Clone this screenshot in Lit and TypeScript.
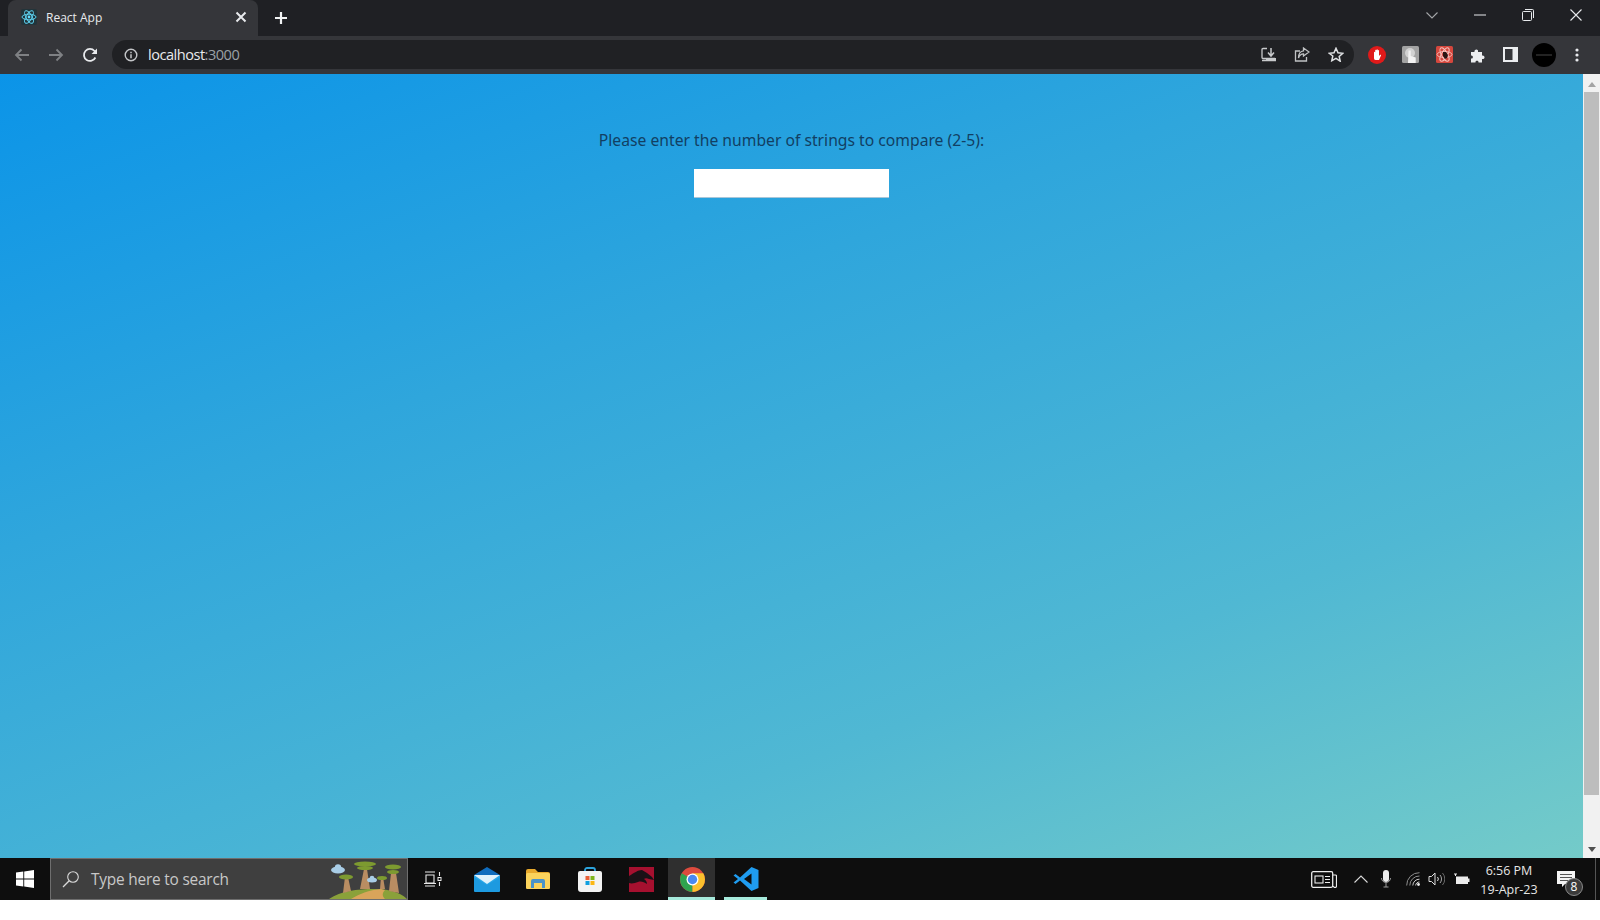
import { LitElement, html, css, svg } from "lit";
import { customElement } from "lit/decorators.js";

const s = (w: number, h: number, body: unknown) =>
  html`<svg width=${w} height=${h} viewBox="0 0 ${w} ${h}" fill="none">${body}</svg>`;

const react = s(16, 16, svg`<rect width="16" height="16" rx="2" fill="#22343a"/>
  <g stroke="#61dafb" stroke-width="0.9" fill="none"><ellipse cx="8" cy="8" rx="7" ry="2.8"/>
  <ellipse cx="8" cy="8" rx="7" ry="2.8" transform="rotate(60 8 8)"/><ellipse cx="8" cy="8" rx="7" ry="2.8" transform="rotate(120 8 8)"/></g>
  <circle cx="8" cy="8" r="1.4" fill="#61dafb"/>`);
const closeX = s(12, 12, svg`<path d="M1.5 1.5 10.5 10.5M10.5 1.5 1.5 10.5" stroke="#e8eaed" stroke-width="2"/>`);
const plus = s(14, 14, svg`<path d="M7 1v12M1 7h12" stroke="#f1f3f4" stroke-width="2.2"/>`);
const chev = s(12, 7, svg`<path d="M.5 .5 6 6l5.500-5.500" stroke="#a4a6a9" stroke-width="1.1"/>`);
const minimize = s(12, 2, svg`<path d="M0 1h12" stroke="#e8eaed" stroke-width="1"/>`);
const restore = s(12, 12, svg`<rect x=".5" y="2.5" width="9" height="9" rx="1" stroke="#e8eaed"/><path d="M3 .5h7.5a1 1 0 0 1 1 1V9" stroke="#e8eaed"/>`);
const winClose = s(12, 12, svg`<path d="M.5.5l11 11M11.500.5l-11 11" stroke="#e8eaed" stroke-width="1.1"/>`);
const back = s(16, 14, svg`<path d="M15 7H2M7.500 1.500 2 7l5.500 5.500" stroke="#7f8184" stroke-width="1.8"/>`);
const fwd = s(16, 14, svg`<path d="M1 7h13M8.500 1.500 14 7l-5.500 5.500" stroke="#7f8184" stroke-width="1.8"/>`);
const reload = s(16, 16, svg`<path d="M13.400 10.500A6 6 0 1 1 12.500 4L14 5.500" stroke="#e8eaed" stroke-width="1.8"/><path d="M15 1.500V7H9.500z" fill="#e8eaed"/>`);
const info = s(14, 14, svg`<circle cx="7" cy="7" r="5.800" stroke="#c4c6c9" stroke-width="1.400"/><path d="M7 6.200v4M7 3.800v1.400" stroke="#c4c6c9" stroke-width="1.500"/>`);
const install = s(16, 15, svg`<path d="M6 1.500H2a1 1 0 0 0-1 1v8a1 1 0 0 0 1 1h12M1 13.500h14" stroke="#c8cacc" stroke-width="1.300"/>
  <path d="M10 1v7M7 5.500l3 3.500 3-3.500" stroke="#c8cacc" stroke-width="1.500"/><path d="M5 11h10v3H5z" fill="#c8cacc"/>`);
const share = s(16, 15, svg`<path d="M6 4H1.500v10h11V10" stroke="#c0c2c4" stroke-width="1.300"/><path d="M9.500 1l5.500 4-5.500 4V6.800C7 6.800 5.500 8 4.500 11c0-4 2-7 5-7.200z" stroke="#c0c2c4" stroke-width="1.300"/>`);
const star = s(16, 15, svg`<path d="M8 1.300l2 4.500 4.800.5-3.600 3.200 1 4.700L8 11.300 3.800 13.700l1-4.700L1.200 6.300 6 5.800z" stroke="#dfe1e3" stroke-width="1.500"/>`);
const stopExt = s(18, 18, svg`<circle cx="9" cy="9" r="9" fill="#e01a1a"/><path d="M6 6.500c0-1 1.200-1 1.200 0V4.500c0-1 1.300-1 1.300 0V4c0-1 1.300-1 1.300 0v.8c0-1 1.200-1 1.200 0V10l.8-1c.7-.7 1.600 0 1.100.8L11 14H7.500C6.500 14 6 13 6 12z" fill="#fff"/>`);
const touchExt = s(17, 17, svg`<rect width="17" height="17" rx="1.500" fill="#a3a3a3"/><circle cx="8" cy="7" r="5" fill="#d2d2d2"/><path d="M6.500 4.500h2.200v5.500l5 1.500v5.500H6z" fill="#f2f2f2"/>`);
const reactExt = s(17, 17, svg`<rect width="17" height="17" rx="1.500" fill="#d5473d"/><g stroke="#f5c2bd" stroke-width=".9" fill="none"><ellipse cx="8.500" cy="8.500" rx="7.500" ry="3"/><ellipse cx="8.500" cy="8.500" rx="7.500" ry="3" transform="rotate(60 8.500 8.500)"/><ellipse cx="8.500" cy="8.500" rx="7.500" ry="3" transform="rotate(120 8.500 8.500)"/></g><path d="M7 6h3l2 3-1 3-2 1-2-3z" fill="#2a1512"/>`);
const puzzle = s(16, 16, svg`<path d="M1 5h3.500c-.8-3 4.300-3.500 3.500 0H12v3.500c3-.8 3.800 4 0 3.500V15.500H8.500c.6-2.500-3.600-2.500-3 0H1V11.500c2.500.6 2.500-3.600 0-3z" fill="#eceef0"/>`);
const sidePanel = s(15, 15, svg`<rect width="15" height="15" fill="#eceef0"/><rect x="2" y="2" width="7.500" height="11" fill="#35363a"/>`);
const avatar = s(24, 24, svg`<circle cx="12" cy="12" r="12" fill="#000"/><path d="M4 12h16" stroke="#666" stroke-width=".7"/>`);
const dots = s(4, 14, svg`<circle cx="2" cy="2" r="1.600" fill="#e8eaed"/><circle cx="2" cy="7" r="1.600" fill="#e8eaed"/><circle cx="2" cy="12" r="1.600" fill="#e8eaed"/>`);

const windows = s(18, 18, svg`<path d="M0 2.600 7.300 1.500V8.500H0zM8.200 1.400 18 0V8.500H8.200zM0 9.400H7.300V16.500L0 15.400zM8.200 9.400H18V18L8.200 16.600z" fill="#fff"/>`);
const searchIco = s(18, 18, svg`<circle cx="11" cy="7" r="5.300" stroke="#d8d8d8" stroke-width="1.100"/><path d="M7.200 10.800 1 17" stroke="#d8d8d8" stroke-width="1.300"/>`);
const doodle = s(78, 38, svg`
  <path d="M0 38c12-8 28-10 45-10 14 0 26 3 33 10z" fill="#8aa13a"/>
  <path d="M22 38c8-5 18-9 30-10l4 1c-3 3-3 6 0 9z" fill="#d9a45a"/>
  <g fill="#b98d62"><path d="M14 32l2-16h3l3 14zM31 28l4-20h3l3 20zM60 30l2-18h5l3 20zM51 28l1-12h2l2 12z"/></g>
  <g fill="#7d9a30"><ellipse cx="36" cy="3" rx="11" ry="2.600"/><ellipse cx="36" cy="7" rx="8" ry="2"/><ellipse cx="17" cy="16" rx="7" ry="2.500"/><ellipse cx="64" cy="6" rx="8" ry="2.600"/><ellipse cx="64" cy="11" rx="6" ry="2"/><ellipse cx="53" cy="17" rx="5" ry="2"/></g>
  <g fill="#a9cde6"><ellipse cx="9" cy="9" rx="7" ry="3.500"/><circle cx="9" cy="6.500" r="3.200"/><ellipse cx="43" cy="19" rx="5" ry="2.500"/><circle cx="43" cy="17" r="2.300"/></g>`);
const taskView = s(18, 16, svg`<path d="M1 1h10M1 15h10M2 4h8v8H2zM0 12.500h12M15.500 1v4M15.500 11v4" stroke="#e8e8e8" stroke-width="1.100"/><rect x="14" y="6.500" width="3" height="3" stroke="#e8e8e8"/>`);
const mail = s(26, 25, svg`<path d="M0 8 13 0l13 8v2H0z" fill="#0f6cbd"/><rect y="8" width="26" height="17" rx="1.500" fill="#29a7e8"/><path d="M0 8l13 9 13-9z" fill="#dff1fb"/><path d="M0 10l13 8 13-8v13a2 2 0 0 1-2 2H2a2 2 0 0 1-2-2z" fill="#1d9ae0"/>`);
const folder = s(24, 20, svg`<path d="M0 2a2 2 0 0 1 2-2h7l3 3h10a2 2 0 0 1 2 2v13a2 2 0 0 1-2 2H2a2 2 0 0 1-2-2z" fill="#e8a92c"/><rect y="4" width="24" height="16" rx="1.500" fill="#fbd35c"/><path d="M5 19v-7a2 2 0 0 1 2-2h10a2 2 0 0 1 2 2v7h-3v-5H8v5z" fill="#4a93c9"/>`);
const store = s(24, 25, svg`<path d="M7 6V3a2 2 0 0 1 2-2h6a2 2 0 0 1 2 2v3" stroke="#2ca3dc" stroke-width="1.800"/><path d="M0 6a2 2 0 0 1 2-2h20a2 2 0 0 1 2 2v16a3 3 0 0 1-3 3H3a3 3 0 0 1-3-3z" fill="#f3f3f3"/><rect x="7.500" y="9" width="4" height="4" fill="#e95f36"/><rect x="12.500" y="9" width="4" height="4" fill="#7fb51c"/><rect x="7.500" y="14" width="4" height="4" fill="#11a0e0"/><rect x="12.500" y="14" width="4" height="4" fill="#fcb713"/>`);
const kali = s(25, 25, svg`<rect width="25" height="25" fill="#a6102f"/><path d="M0 9c5-3 9-6 13-6l5 3 5 4 2 3-5-1c-2-1-4-1-5 0 2 1 3 3 3 5-3-2-6-3-9-2-3 1-6 2-9 1z" fill="#1a1116"/>`);
const chrome = s(25, 25, svg`<circle cx="12.500" cy="12.500" r="12.500" fill="#dd4b3e"/><path d="M12.500 12.500 1.700 6.300A12.500 12.500 0 0 0 12.500 25z" fill="#2fa44f"/><path d="M12.500 25A12.500 12.500 0 0 0 23.300 6.300H12.500z" fill="#fbc02d"/><circle cx="12.500" cy="12.500" r="6" fill="#fff"/><circle cx="12.500" cy="12.500" r="4.700" fill="#4a89f0"/>`);
const vscode = s(26, 26, svg`<path d="M18.500 1 25.500 4v18l-7 3L7 14.500 2.500 18 .5 16.500 5 13 .5 9.500 2.500 8 7 11.500z" fill="#1f9cf0"/><path d="M18.500 7.500 11 13l7.500 5.500z" fill="#0e0e0e"/>`);
const news = s(26, 17, svg`<rect x=".7" y=".7" width="21" height="15.600" rx="1.500" stroke="#ececec" stroke-width="1.300"/><path d="M22 4h2.500a1 1 0 0 1 1 1v10a1.500 1.500 0 0 1-3 0" stroke="#ececec" stroke-width="1.200"/><rect x="4" y="5" width="8" height="7" stroke="#ececec" stroke-width="1.100"/><path d="M14 5.500h5M14 8.500h5M14 11.500h5" stroke="#ececec" stroke-width="1.100"/>`);
const up = s(14, 8, svg`<path d="M.5 7.500 7 1l6.500 6.500" stroke="#dadada" stroke-width="1.100"/>`);
const mic = s(10, 18, svg`<rect x="2" y="0" width="6" height="12" rx="3" fill="#ececec"/><path d="M.5 8a4.500 4.500 0 0 0 9 0M5 13v4M2.500 17h5" stroke="#9a9a9a"/>`);
const wifi = s(15, 14, svg`<path d="M.7 13.500A12.500 12.500 0 0 1 13.500 .7M3.800 13.500A9.500 9.500 0 0 1 13.500 4" stroke="#8e8e8e"/><path d="M6.800 13.500A6.500 6.500 0 0 1 13.500 7.200M9.700 13.500A3.500 3.500 0 0 1 13.500 10" stroke="#c9c9c9"/><circle cx="12.500" cy="12.500" r="1.400" fill="#ececec"/>`);
const vol = s(17, 14, svg`<path d="M1 4.500h2.500L7 1v12L3.500 9.500H1z" stroke="#e0e0e0"/><path d="M9.500 5a3 3 0 0 1 0 4" stroke="#e0e0e0"/><path d="M12 3a6 6 0 0 1 0 8" stroke="#a8a8a8"/><path d="M14.500 1a9 9 0 0 1 0 12" stroke="#6a6a6a"/>`);
const batt = s(17, 12, svg`<path d="M1 1h3M2.500 1v2" stroke="#ececec"/><rect x="3" y="3.500" width="12" height="7.500" fill="#ececec"/><rect x="15" y="5.500" width="1.500" height="3.500" fill="#ececec"/>`);
const notif = s(18, 16, svg`<path d="M0 0h18v13H8l-3 3v-3H0z" fill="#f4f4f4"/><path d="M3 3.500h12M3 6.500h12M3 9.500h8" stroke="#555"/>`);

@customElement("app-root")
export class AppRoot extends LitElement {
  static styles = css`
    :host { display: block; width: 1600px; height: 920px; background: #fff; font-family: "Open Sans", "Noto Sans", sans-serif; overflow: hidden; }
    svg { display: block; flex: none; }
    .tabstrip { height: 36px; background: #1f2024; display: flex; padding-left: 8px; }
    .tab { width: 250px; height: 36px; background: #35363a; border-radius: 8px 8px 0 0; display: flex; align-items: center; padding: 0 11px 2px 13px; box-sizing: border-box; color: #e8eaed; font-size: 12px; }
    .tab .title { margin-left: 9px; flex: 1; }
    .plus { width: 46px; display: flex; align-items: center; justify-content: center; }
    .spacer { flex: 1; }
    .ctl { width: 48px; height: 30px; display: flex; align-items: center; justify-content: center; }
    .toolbar { height: 38px; background: #35363a; display: flex; align-items: center; padding: 0 6px 1px 5px; box-sizing: border-box; }
    .nav { width: 34px; display: flex; justify-content: center; }
    .omni { width: 1242px; height: 29px; margin-left: 5px; margin-right: 6px; background: #202124; border-radius: 15px; display: flex; align-items: center; padding: 0 1px 0 12px; box-sizing: border-box; font-size: 14.6px; color: #e8eaed; }
    .omni .url { margin-left: 10px; flex: 1; letter-spacing: -0.5px; padding-bottom: 2px; }
    .omni .port { color: #9aa0a6; }
    .om { width: 33.5px; display: flex; justify-content: center; }
    .ext { width: 33.5px; display: flex; justify-content: center; box-sizing: border-box; }
    .ext.nudge { padding-left: 2px; }
    .viewport { height: 784px; display: flex; }
    .page { width: 1583px; box-sizing: border-box; padding-top: 54px; display: flex; flex-direction: column; align-items: center; background: linear-gradient(160deg, #0b94e8 0%, #2fa6dc 35%, #50b8d3 72%, #74cbc9 100%); }
    .page label { font-size: 15.7px; line-height: 24px; height: 24px; color: #123f63; font-family: "Noto Sans", sans-serif; }
    .page input { width: 195px; height: 29px; margin-top: 17px; box-sizing: border-box; background: #fff; border: none; border-bottom: 1px solid #a9c6d8; padding: 0; outline: none; }
    .scroll { width: 17px; background: #f1f1f1; display: flex; flex-direction: column; align-items: center; }
    .arrow { height: 17px; width: 100%; display: flex; align-items: center; justify-content: center; }
    .arrow.top { padding-top: 3px; box-sizing: border-box; }
    .tri-up { border: 4px solid transparent; border-top: 0; border-bottom: 5px solid #a3a3a3; }
    .tri-down { border: 4px solid transparent; border-bottom: 0; border-top: 5px solid #505050; }
    .thumb { width: 15px; height: 703px; margin-top: 1px; background: #bdbdbd; }
    .scroll .fill { flex: 1; }
    .taskbar { height: 42px; background: #0e0e0e; display: flex; align-items: center; color: #f0f0f0; }
    .start { width: 50px; display: flex; justify-content: center; }
    .search { width: 358px; height: 42px; box-sizing: border-box; background: #3f3f3f; border: 1px solid #6e6e6e; display: flex; align-items: center; padding-left: 11px; color: #c8c8c8; font-size: 15.4px; }
    .search .txt { margin-left: 11px; flex: 1; letter-spacing: -.2px; }
    .search .doo { align-self: flex-end; }
    .tb { width: 51.5px; height: 42px; display: flex; align-items: center; justify-content: center; box-sizing: border-box; position: relative; }
    .tb.first { width: 50px; margin-right: 3px; }
    .tb.chrome { background: #2f2f2f; width: 47px; margin-left: 1px; margin-right: 9px; padding-left: 2px; }
    .tb.code { width: 43px; }
    .tb.chrome::after, .tb.code::after { content: ""; position: absolute; left: 0; right: 0; bottom: 0; height: 3px; background: #a6eadc; }
    .tray { display: flex; align-items: center; justify-content: center; }
    .t-news { width: 49px; } .t-up { width: 25px; } .t-mic { width: 25px; } .t-wifi { width: 29px; } .t-vol { width: 17px; } .t-batt { width: 33px; }
    .clock { width: 63px; white-space: nowrap; display: flex; flex-direction: column; align-items: center; font-size: 12.5px; line-height: 19px; color: #e6e6e6; margin-top: 2px; }
    .notif { position: relative; width: 44px; box-sizing: border-box; padding-left: 9px; margin-left: 7.5px; }
    .badge { position: absolute; left: 17px; top: 7px; width: 18px; height: 18px; line-height: 16px; border-radius: 50%; background: #3a3a3a; border: 1px solid #8a8a8a; box-sizing: border-box; text-align: center; font-size: 12px; color: #fff; }
    .edge { width: 1px; height: 42px; background: #555; margin-left: 3px; margin-right: 4px; }
    .bottom { height: 20px; background: #fff; }
  `;

  render() {
    return html`
      <div class="tabstrip">
        <div class="tab">${react}<span class="title">React App</span>${closeX}</div>
        <div class="plus">${plus}</div>
        <div class="spacer"></div>
        <div class="ctl">${chev}</div><div class="ctl">${minimize}</div><div class="ctl">${restore}</div><div class="ctl">${winClose}</div>
      </div>
      <div class="toolbar">
        <div class="nav">${back}</div><div class="nav">${fwd}</div><div class="nav">${reload}</div>
        <div class="omni">${info}<span class="url">localhost<span class="port">:3000</span></span>
          <div class="om">${install}</div><div class="om">${share}</div><div class="om">${star}</div>
        </div>
        <div class="ext nudge">${stopExt}</div><div class="ext nudge">${touchExt}</div><div class="ext nudge">${reactExt}</div><div class="ext nudge">${puzzle}</div><div class="ext">${sidePanel}</div><div class="ext">${avatar}</div><div class="ext">${dots}</div>
      </div>
      <div class="viewport">
        <div class="page">
          <label for="n">Please enter the number of strings to compare (2-5):</label>
          <input id="n" type="text" />
        </div>
        <div class="scroll">
          <div class="arrow top"><div class="tri-up"></div></div>
          <div class="thumb"></div>
          <div class="fill"></div>
          <div class="arrow"><div class="tri-down"></div></div>
        </div>
      </div>
      <div class="taskbar">
        <div class="start">${windows}</div>
        <div class="search">${searchIco}<span class="txt">Type here to search</span><span class="doo">${doodle}</span></div>
        <div class="tb first">${taskView}</div>
        <div class="tb">${mail}</div><div class="tb">${folder}</div><div class="tb">${store}</div>
        <div class="tb">${kali}</div>
        <div class="tb chrome">${chrome}</div>
        <div class="tb code">${vscode}</div>
        <div class="spacer"></div>
        <div class="tray t-news">${news}</div><div class="tray t-up">${up}</div><div class="tray t-mic">${mic}</div><div class="tray t-wifi">${wifi}</div><div class="tray t-vol">${vol}</div><div class="tray t-batt">${batt}</div>
        <div class="clock"><span>6:56 PM</span><span>19-Apr-23</span></div>
        <div class="notif">${notif}<span class="badge">8</span></div>
        <div class="edge"></div>
      </div>
      <div class="bottom"></div>
    `;
  }
}
